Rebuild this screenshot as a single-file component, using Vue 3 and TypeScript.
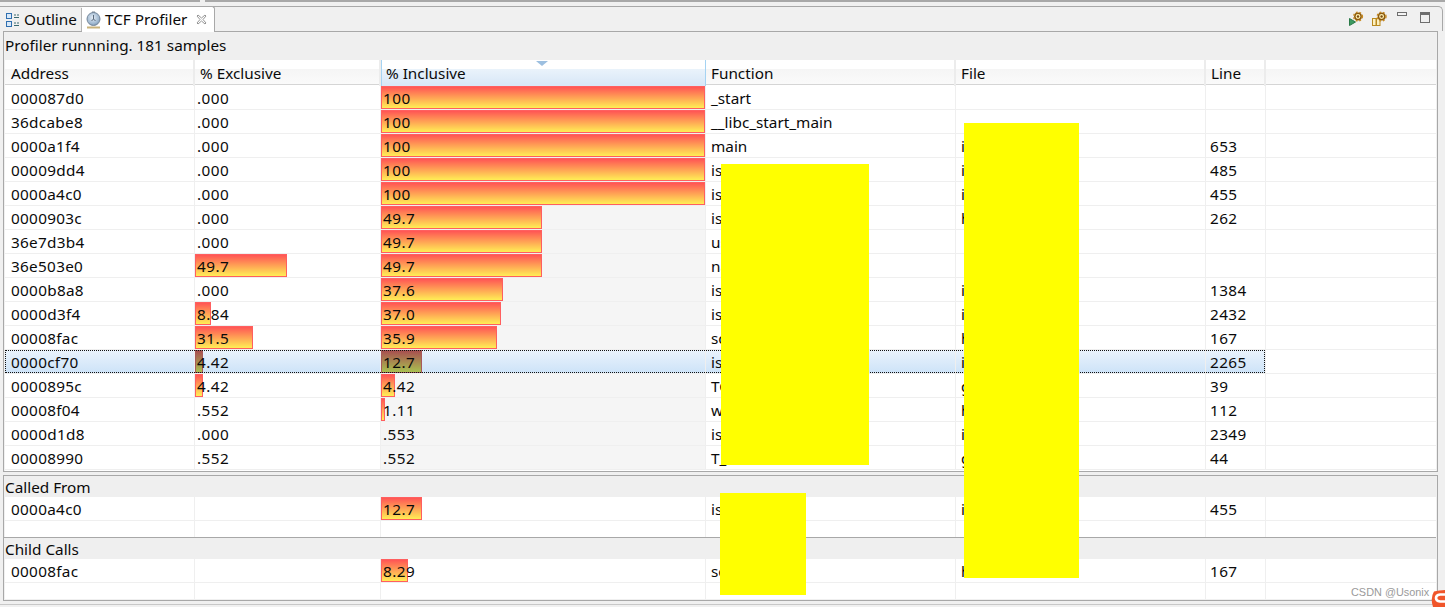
<script setup lang="ts">
interface Row {
  addr: string
  excl: string
  incl: string
  fn: string
  file: string
  line: string
  sel?: boolean
}

const rows: Row[] = [
  { addr: '000087d0', excl: '.000', incl: '100', fn: '_start', file: '', line: '' },
  { addr: '36dcabe8', excl: '.000', incl: '100', fn: '__libc_start_main', file: '', line: '' },
  { addr: '0000a1f4', excl: '.000', incl: '100', fn: 'main', file: 'i', line: '653' },
  { addr: '00009dd4', excl: '.000', incl: '100', fn: 'is', file: 'i', line: '485' },
  { addr: '0000a4c0', excl: '.000', incl: '100', fn: 'is', file: 'i', line: '455' },
  { addr: '0000903c', excl: '.000', incl: '49.7', fn: 'is', file: 'h', line: '262' },
  { addr: '36e7d3b4', excl: '.000', incl: '49.7', fn: 'us', file: '', line: '' },
  { addr: '36e503e0', excl: '49.7', incl: '49.7', fn: 'na', file: '', line: '' },
  { addr: '0000b8a8', excl: '.000', incl: '37.6', fn: 'is', file: 'i', line: '1384' },
  { addr: '0000d3f4', excl: '8.84', incl: '37.0', fn: 'is', file: 'i', line: '2432' },
  { addr: '00008fac', excl: '31.5', incl: '35.9', fn: 'so', file: 'h', line: '167' },
  { addr: '0000cf70', excl: '4.42', incl: '12.7', fn: 'is', file: 'i', line: '2265', sel: true },
  { addr: '0000895c', excl: '4.42', incl: '4.42', fn: 'TC', file: 'g', line: '39' },
  { addr: '00008f04', excl: '.552', incl: '1.11', fn: 'w', file: 'h', line: '112' },
  { addr: '0000d1d8', excl: '.000', incl: '.553', fn: 'is', file: 'i', line: '2349' },
  { addr: '00008990', excl: '.552', incl: '.552', fn: 'T_', file: 'g', line: '44' }
]

const calledFrom: Row = { addr: '0000a4c0', excl: '', incl: '12.7', fn: 'is', file: 'i', line: '455' }
const childCalls: Row = { addr: '00008fac', excl: '', incl: '8.29', fn: 'so', file: 'h', line: '167' }

function barWidth(v: string): string {
  return `${parseFloat(v)}%`
}
function hasBar(v: string): boolean {
  return v !== '' && parseFloat(v) >= 1
}
</script>

<template>
  <div class="page">
    <div class="topline"><span class="seg a"></span><span class="seg b"></span></div>

    <div class="tabbar">
      <div class="tab outline">
        <svg class="ico" width="16" height="16" viewBox="0 0 16 16">
          <rect x="1.5" y="1.5" width="5" height="5" fill="#d8e8f8" stroke="#2f6fb0" />
          <rect x="1.5" y="9.5" width="5" height="5" fill="#d8e8f8" stroke="#2f6fb0" />
          <path d="M9 3h2M12 3h2M9 5.500h5M9 11h2M12 11h2M9 13.500h5" stroke="#3a6a70" fill="none" />
        </svg>
        <span>Outline</span>
      </div>
      <div class="tab active">
        <svg class="ico watch" width="18" height="18" viewBox="0 0 18 18">
          <defs>
            <radialGradient id="wg" cx="0.45" cy="0.4" r="0.7">
              <stop offset="0" stop-color="#e6eef6" />
              <stop offset="0.65" stop-color="#9fb8d0" />
              <stop offset="1" stop-color="#66809c" />
            </radialGradient>
          </defs>
          <rect x="7" y="0.500" width="3" height="2" fill="#7f8c98" />
          <circle cx="8.500" cy="8" r="6.500" fill="url(#wg)" stroke="#75879a" />
          <path d="M8.500 4v4l-2 2M8.500 8l2 2" stroke="#5a6a7c" fill="none" />
          <path d="M2 16.500h13" stroke="#c9b27a" stroke-width="2" />
        </svg>
        <span>TCF Profiler</span>
        <svg class="close" width="11" height="11" viewBox="0 0 11 11">
          <path d="M1 2l1-1 3.500 3L9 1l1 1-3 3.500 3 3.500-1 1-3.500-3L2 10 1 9l3-3.500z" fill="#fff" stroke="#8a8a8a" stroke-width="0.9" />
        </svg>
      </div>
      <div class="tools">
        <svg width="18" height="18" viewBox="0 0 18 18">
          <path d="M1.500 7.500v7l6-3.500z" fill="#3c9a60" stroke="#2a7a48" stroke-width="1" />
          <circle cx="10" cy="5.500" r="3.200" fill="#fff0b0" stroke="#8a5a10" stroke-width="1.500" />
          <circle cx="10" cy="5.500" r="4.400" fill="none" stroke="#c88a20" stroke-width="1.400" stroke-dasharray="1.800 1.800" />
          <circle cx="10" cy="5.500" r="1.200" fill="#7a4a10" />
        </svg>
        <svg class="t2" width="18" height="18" viewBox="0 0 18 18">
          <rect x="0.500" y="7.500" width="3.500" height="7" fill="#fdf0c0" stroke="#b88a20" />
          <rect x="4.500" y="7.500" width="3.500" height="7" fill="#fdf0c0" stroke="#b88a20" />
          <circle cx="9.600" cy="5.500" r="3.200" fill="#fff0b0" stroke="#8a5a10" stroke-width="1.500" />
          <circle cx="9.600" cy="5.500" r="4.400" fill="none" stroke="#c88a20" stroke-width="1.400" stroke-dasharray="1.800 1.800" />
          <circle cx="9.600" cy="5.500" r="1.200" fill="#7a4a10" />
        </svg>
        <span class="minbox"></span>
        <span class="maxbox"></span>
      </div>
    </div>

    <div class="box top">
      <div class="status">Profiler runnning. 181 samples</div>
      <div class="grid head">
        <div class="hc">Address</div>
        <div class="hc">% Exclusive</div>
        <div class="hc sorted">% Inclusive<i class="arrow"></i></div>
        <div class="hc">Function</div>
        <div class="hc">File</div>
        <div class="hc">Line</div>
        <div class="hc fill"></div>
      </div>
      <div class="headgap"></div>
      <div v-for="r in rows" :key="r.addr + r.line" class="grid row" :class="{ sel: r.sel }">
        <div class="c addr">{{ r.addr }}</div>
        <div class="c num">
          <span v-if="hasBar(r.excl)" class="bar" :style="{ width: barWidth(r.excl) }"></span>
          <span class="t">{{ r.excl }}</span>
        </div>
        <div class="c num inc">
          <span v-if="hasBar(r.incl)" class="bar" :style="{ width: barWidth(r.incl) }"></span>
          <span class="t">{{ r.incl }}</span>
        </div>
        <div class="c txt">{{ r.fn }}</div>
        <div class="c txt">{{ r.file }}</div>
        <div class="c txt ln">{{ r.line }}</div>
        <div class="c fill"></div>
      </div>
      <div class="tailgap"></div>
    </div>

    <div class="box bottom">
      <div class="band">Called From</div>
      <div class="grid row">
        <div class="c addr">{{ calledFrom.addr }}</div>
        <div class="c num"></div>
        <div class="c num">
          <span class="bar" :style="{ width: barWidth(calledFrom.incl) }"></span>
          <span class="t">{{ calledFrom.incl }}</span>
        </div>
        <div class="c txt">{{ calledFrom.fn }}</div>
        <div class="c txt">{{ calledFrom.file }}</div>
        <div class="c txt ln">{{ calledFrom.line }}</div>
        <div class="c fill"></div>
      </div>
      <div class="grid blank">
        <div class="c"></div><div class="c"></div><div class="c"></div><div class="c"></div><div class="c"></div><div class="c"></div><div class="c fill"></div>
      </div>
      <div class="divider"></div>
      <div class="band">Child Calls</div>
      <div class="grid row">
        <div class="c addr">{{ childCalls.addr }}</div>
        <div class="c num"></div>
        <div class="c num">
          <span class="bar" :style="{ width: barWidth(childCalls.incl) }"></span>
          <span class="t">{{ childCalls.incl }}</span>
        </div>
        <div class="c txt">{{ childCalls.fn }}</div>
        <div class="c txt">{{ childCalls.file }}</div>
        <div class="c txt ln">{{ childCalls.line }}</div>
        <div class="c fill"></div>
      </div>
      <div class="grid blank">
        <div class="c"></div><div class="c"></div><div class="c"></div><div class="c"></div><div class="c"></div><div class="c"></div><div class="c fill"></div>
      </div>
    </div>
    <div class="outerfoot"></div>

    <div class="mask m1"></div>
    <div class="mask m2"></div>
    <div class="mask m3"></div>

    <div class="mark">CSDN @Usonix</div>
    <svg class="logo" width="14" height="17" viewBox="0 0 14 17">
      <path d="M3 1.500Q8 0 14 0V17H2Q-1 8 3 1.500z" fill="#f0552a" />
      <path d="M14 4.500H9Q5 5 5 8t4 3.500h5" fill="none" stroke="#fff" stroke-width="2.600" />
    </svg>
  </div>
</template>

<style>
html,
body {
  margin: 0;
  background: #f0f0f0;
  overflow: hidden;
}
</style>

<style scoped>
.page {
  position: relative;
  width: 1445px;
  height: 607px;
  overflow: hidden;
  background: #f0f0f0;
  color: #0a0a0a;
  font-family: "Noto Sans", "Open Sans", sans-serif;
  font-size: 15.3px;
  line-height: 23px;
}

.topline {
  display: flex;
  gap: 5px;
  height: 2px;
  margin-bottom: 4px;
}
.seg {
  display: block;
  height: 2px;
  background: #a8a8a8;
}
.seg.a { width: 200px; }
.seg.b { flex: 1; }

.tabbar {
  display: flex;
  margin-right: 2px;
  border-top: 1px solid #a8a8a8;
  border-right: 1px solid #a8a8a8;
  border-top-right-radius: 5px;
  box-sizing: border-box;
  height: 25px;
  align-items: stretch;
  position: relative;
}
.tab {
  display: flex;
  align-items: center;
  box-sizing: border-box;
}
.tab.outline {
  width: 82px;
  padding-left: 5px;
  gap: 3px;
  margin-top: 1px;
  border-right: 1px solid #b4b4b4;
}
.tab.active {
  width: 133px;
  margin-top: -1px;
  margin-bottom: -1px;
  padding-left: 3px;
  gap: 2px;
  background: #fff;
  border: 1px solid #a8a8a8;
  border-bottom: 0;
  border-left: 0;
  border-radius: 0 3px 0 0;
  position: relative;
  z-index: 1;
}
.close {
  margin-left: 7px;
}
.ico {
  flex: none;
}
.tools {
  margin-left: auto;
  display: flex;
  align-items: flex-start;
  padding-top: 4px;
  padding-right: 12px;
}
.tools .t2 {
  margin-left: 6px;
}
.minbox {
  display: block;
  width: 8px;
  height: 2px;
  border: 1px solid #6e6e6e;
  margin: 1px 0 0 7px;
  background: #f4f4f4;
}
.maxbox {
  display: block;
  width: 8px;
  height: 7px;
  border: 1px solid #6e6e6e;
  border-top-width: 3px;
  margin: 1px 0 0 13px;
}

.box {
  margin-left: 3px;
  margin-right: 7px;
  border: 1px solid #a8a8a8;
  padding: 0 1px;
  background: #f0f0f0;
}
.box.top {
  margin-top: 0;
  height: 438px;
  box-sizing: content-box;
  padding-top: 1px;
}
.box.bottom {
  margin-top: 3px;
  height: 124px;
}

.status {
  height: 27px;
  line-height: 25px;
  background: #efefef;
  padding-left: 0;
}

.grid {
  display: grid;
  grid-template-columns: 190px 186px 325px 250px 250px 60px 1fr;
  background: #fff;
}

.head {
  height: 25px;
  background: linear-gradient(#fff 0, #fff 9px, #f5f5f5 9px, #fafafa 24px, #d5d5d5 24px);
}
.hc {
  padding-left: 6px;
  box-sizing: border-box;
  line-height: 27px;
  border-right: 2px solid #ececec;
  margin-bottom: 1px;
  position: relative;
}
.hc:nth-child(n + 2) {
  padding-left: 5px;
}
.hc.fill {
  border-right: 0;
}
.hc.sorted {
  background: linear-gradient(#fff 0, #fff 9px, #eaf3fb 9px, #d9e8f7 24px);
  border-right: 1px solid #a5d3f2;
  border-left: 0;
  box-shadow: inset 1px 0 0 #a5d3f2;
}
.arrow {
  position: absolute;
  left: 155px;
  top: 1px;
  width: 0;
  height: 0;
  border-left: 6px solid transparent;
  border-right: 6px solid transparent;
  border-top: 5px solid #9cbfe0;
}
.headgap {
  height: 1px;
  background: #fff;
}

.row {
  height: 24px;
  position: relative;
  box-sizing: border-box;
  border-bottom: 1px solid #efefef;
}
.c {
  position: relative;
  box-sizing: border-box;
  border-right: 1px solid #efefef;
  min-width: 0;
  height: 23px;
  white-space: nowrap;
  overflow: visible;
  line-height: 25px;
}
.c.fill {
  border-right: 0;
}
.addr {
  padding-left: 6px;
  letter-spacing: 0.3px;
}
.num {
  padding-left: 2px;
  letter-spacing: 0.5px;
}
.txt {
  padding-left: 5px;
}
.ln {
  padding-left: 4px;
  letter-spacing: 0.4px;
}
.inc {
  background: #f5f5f5;
}
.t {
  position: relative;
  z-index: 1;
}
.bar {
  position: absolute;
  left: 0;
  top: 0;
  bottom: 0;
  box-sizing: border-box;
  border: 1px solid #ff5f5f;
  background: linear-gradient(#ff5555, #ffee55);
}

.sel .c:not(.fill) {
  background: linear-gradient(#eaf3fc, #cde3f8);
}
.sel .bar {
  border-color: #a85a5a;
  background: linear-gradient(#a85050, #a8c050);
}
.sel::after {
  content: "";
  position: absolute;
  left: 0;
  top: 0;
  width: 1260px;
  height: 23px;
  box-sizing: border-box;
  border: 1px dotted #111;
  pointer-events: none;
}

.tailgap {
  height: 1px;
  background: #fff;
}

.band {
  height: 21px;
  line-height: 22px;
  background: #efefef;
}
.blank {
  height: 16px;
}
.blank .c {
  height: 16px;
}
.divider {
  height: 1px;
  background: #a8a8a8;
  margin-left: -1px;
}

.outerfoot {
  margin-top: 3px;
  height: 1px;
  background: #c8c8c8;
}

.mask {
  position: absolute;
  background: #ffff00;
}
.m1 { left: 721px; top: 164px; width: 148px; height: 301px; }
.m2 { left: 964px; top: 123px; width: 115px; height: 455px; }
.m3 { left: 720px; top: 493px; width: 86px; height: 102px; }

.mark {
  position: absolute;
  left: 1351px;
  top: 584px;
  font-family: "Liberation Sans", sans-serif;
  font-size: 10.900px;
  line-height: 16px;
  color: #9a9a9a;
  text-shadow: 0 0 2px #fff;
}
.logo {
  position: absolute;
  left: 1431px;
  top: 590px;
}
</style>
